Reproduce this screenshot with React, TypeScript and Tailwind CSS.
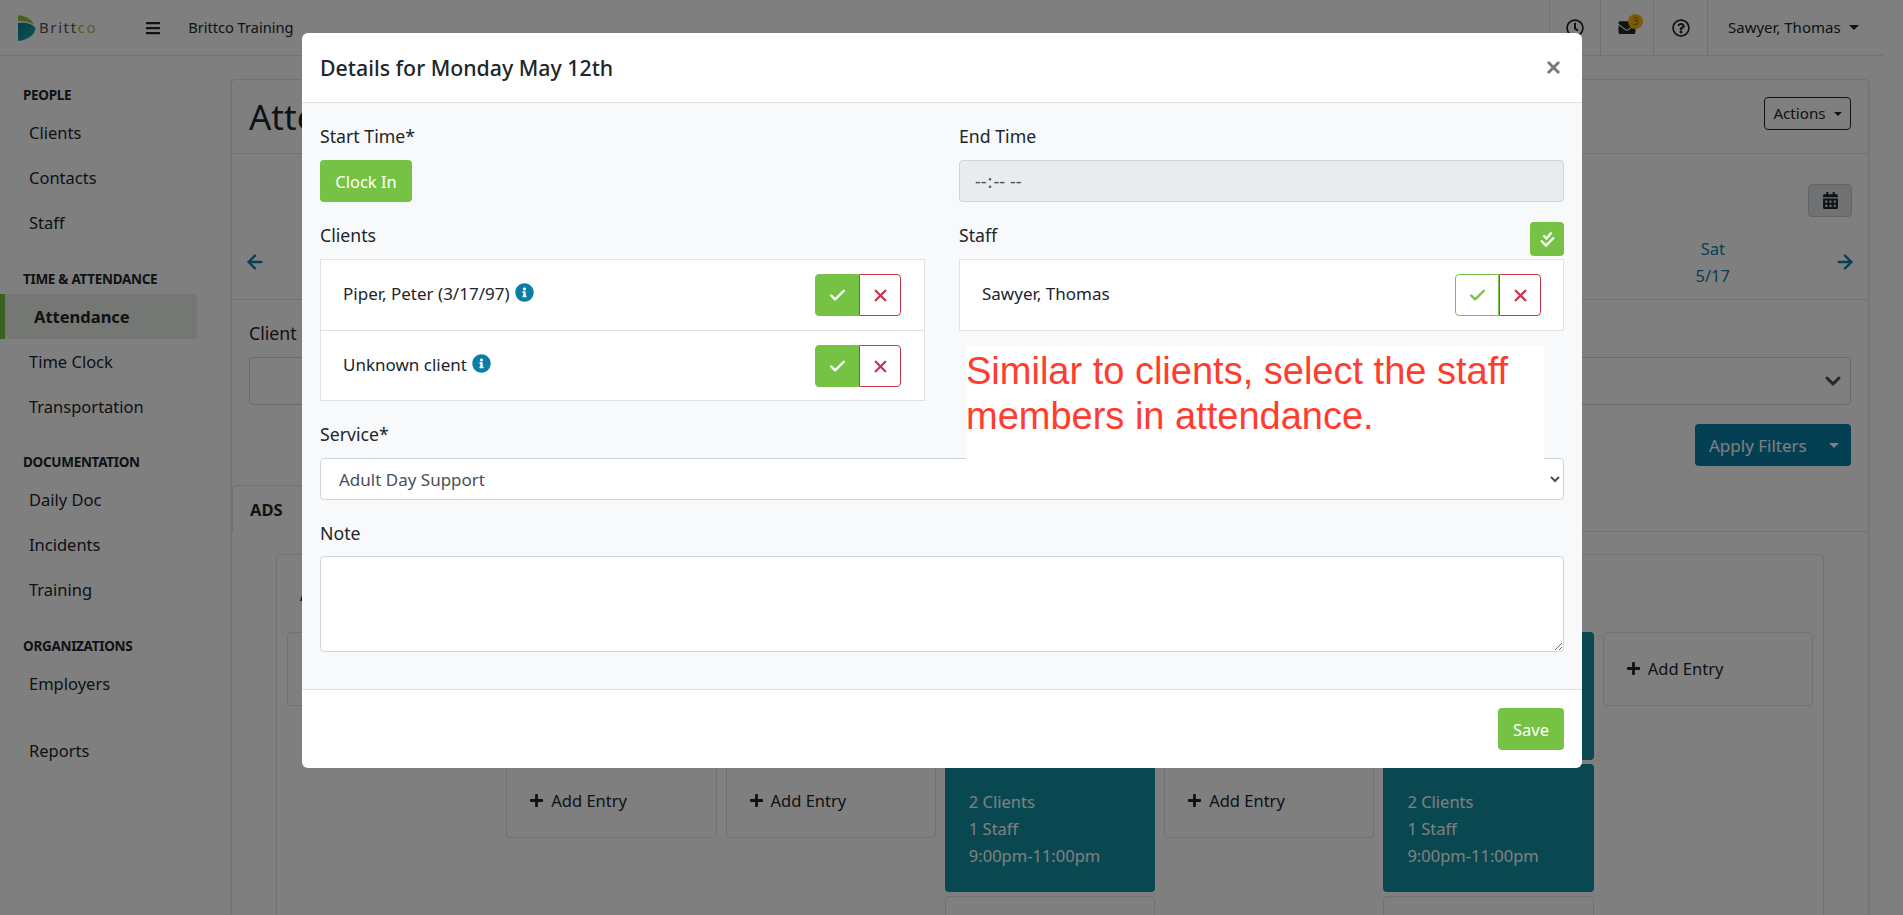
import { ArrowLeft, ArrowRight, Check, ChevronDown, X } from "lucide-react"
import {
  FaBars,
  FaCalendarAlt,
  FaEnvelope,
  FaInfoCircle,
  FaPlus,
  FaRegClock,
  FaRegQuestionCircle,
} from "react-icons/fa"

const navGroups = [
  { title: "PEOPLE", items: ["Clients", "Contacts", "Staff"] },
  { title: "TIME & ATTENDANCE", items: ["Attendance", "Time Clock", "Transportation"] },
  { title: "DOCUMENTATION", items: ["Daily Doc", "Incidents", "Training"] },
  { title: "ORGANIZATIONS", items: ["Employers"] },
]

function Logo() {
  return (
    <svg width="18" height="26" viewBox="0 0 18 26">
      <defs>
        <linearGradient id="leaf" x1="0" y1="0" x2="1" y2="1">
          <stop offset="0" stopColor="#0a7aa0" />
          <stop offset="1" stopColor="#1caf96" />
        </linearGradient>
      </defs>
      <path d="M0 0C8 1 14 4 16 10C12 7 6 6 0 6Z" fill="#9bc23c" />
      <path d="M0 8C7 7 14 8 17.5 13C17 20 10 25 0 26Z" fill="url(#leaf)" />
    </svg>
  )
}

function AddEntry({ className = "h-[74px]" }: { className?: string }) {
  return (
    <div className={`flex items-center gap-[7px] rounded border border-[#dee2e6] pb-[2px] pl-[22px] ${className}`}>
      <FaPlus className="h-[15px] w-[15px]" />
      Add Entry
    </div>
  )
}

function Visit({ className = "h-[128px]" }: { className?: string }) {
  return (
    <div className={`flex flex-col justify-end rounded bg-[#1291a3] pb-[23px] pl-[24px] text-white ${className}`}>
      <div>2 Clients</div>
      <div>1 Staff</div>
      <div>9:00pm-11:00pm</div>
    </div>
  )
}

function ToggleGroup({ selected }: { selected: boolean }) {
  return (
    <div className="flex h-[42px] w-[86px] shrink-0">
      <div
        className={`flex w-[44px] items-center justify-center rounded-l border border-[#76c244] ${
          selected ? "bg-[#76c244] text-white" : "bg-white text-[#76c244]"
        }`}
      >
        <Check className="h-[19px] w-[19px]" strokeWidth={3} />
      </div>
      <div className="flex w-[42px] items-center justify-center rounded-r border border-[#c9364f] bg-white text-[#c9364f]">
        <X className="h-[19px] w-[19px]" strokeWidth={3} />
      </div>
    </div>
  )
}

function PersonRow({
  name,
  info,
  selected,
  className = "h-[71px] pr-[23px] last:h-[69px] last:border-b-0",
}: {
  name: string
  info?: boolean
  selected: boolean
  className?: string
}) {
  return (
    <div className={`flex justify-between border-b border-[#dee2e6] pl-[22px] pt-[14px] ${className}`}>
      <div className="flex h-[38px] items-center gap-[5px] text-[17px]">
        {name}
        {info && <FaInfoCircle className="mb-[2px] h-[19px] w-[19px] text-[#0b7ea8]" />}
      </div>
      <ToggleGroup selected={selected} />
    </div>
  )
}

function Sidebar() {
  return (
    <aside className="w-[231px] shrink-0 pt-[25px]">
      {navGroups.map((group) => (
        <div key={group.title} className="mb-[19.6px] w-[197px]">
          <div className="flex h-[29px] items-center pl-[23px] text-[13.5px] font-bold tracking-[-0.3px] text-[#212529]">
            {group.title}
          </div>
          {group.items.map((item) =>
            item === "Attendance" ? (
              <div
                key={item}
                className="flex h-[45px] items-center border-l-[5px] border-[#76c244] bg-[#e9eee6] pl-[29px] font-bold text-[#212529]"
              >
                {item}
              </div>
            ) : (
              <div key={item} className="flex h-[45px] items-center pl-[29px] text-[#212529]">
                {item}
              </div>
            ),
          )}
        </div>
      ))}
      <div className="mt-[22px] flex h-[45px] items-center pl-[29px] text-[#212529]">Reports</div>
    </aside>
  )
}

function TopBar() {
  return (
    <header className="flex h-[56px] w-[1883px] items-center border-b border-[#dee2e6] pl-[18px] text-[#212529]">
      <Logo />
      <span className="ml-[3px] text-[15px] tracking-[1.6px] text-[#555]">
        Britt<span className="text-[#a8c43c]">co</span>
      </span>
      <FaBars className="ml-[48px] h-[16px] w-[16px]" />
      <span className="ml-[27px] text-[14.6px]">Brittco Training</span>
      <div className="ml-auto flex h-full">
        <div className="flex w-[51px] items-center justify-center border-l border-[#dee2e6]">
          <FaRegClock className="h-[18px] w-[18px]" />
        </div>
        <div className="relative flex w-[53px] items-center justify-center border-l border-[#dee2e6]">
          <FaEnvelope className="h-[17px] w-[18px]" />
          <span className="absolute left-[27px] top-[14px] flex h-[15px] w-[15px] items-center justify-center rounded-full bg-[#f5b50f] text-[10px] text-[#8a6a10]">
            3
          </span>
        </div>
        <div className="flex w-[54px] items-center justify-center border-l border-[#dee2e6]">
          <FaRegQuestionCircle className="h-[18px] w-[18px]" />
        </div>
        <div className="flex w-[176px] items-center gap-[8px] border-l border-[#dee2e6] pl-[20px] text-[15px]">
          Sawyer, Thomas
          <span className="h-0 w-0 border-x-[5px] border-t-[5px] border-x-transparent border-t-[#212529]" />
        </div>
      </div>
    </header>
  )
}

function PageContent() {
  return (
    <main className="w-[1638px] pt-[23px]">
      <div className="rounded border border-[#dee2e6] shadow-sm">
        <div className="flex h-[74px] items-center justify-between border-b border-[#dee2e6] pl-[17px] pr-[17px]">
          <h1 className="text-[35px] text-[#212529]">Attendance</h1>
          <button className="mb-[6px] flex h-[33px] w-[87px] items-center justify-center gap-[8px] rounded border border-[#212529] text-[15.2px]">
            Actions
            <span className="h-0 w-0 border-x-[4px] border-t-[4px] border-x-transparent border-t-[#212529]" />
          </button>
        </div>

        <div className="h-[146px] border-b border-[#dee2e6] pl-[12px] pr-[12px] pt-[30px]">
          <div className="flex justify-end pr-[4px]">
            <div className="flex h-[33px] w-[44px] items-center justify-center rounded border border-[#c4cad0] bg-[#dfe3e7]">
              <FaCalendarAlt className="h-[17px] w-[15px]" />
            </div>
          </div>
          <div className="mt-[18px] flex items-center justify-between text-[#0b7ea8]">
            <ArrowLeft className="h-[22px] w-[22px]" strokeWidth={2.5} />
            <div className="ml-auto mr-[104px] text-center leading-[27px]">
              <div>Sat</div>
              <div>5/17</div>
            </div>
            <ArrowRight className="h-[22px] w-[22px]" strokeWidth={2.5} />
          </div>
        </div>

        <div className="px-[17px] pt-[20px]">
          <div className="text-[17.7px] leading-[27px]">Client</div>
          <div className="mt-[10px] flex h-[48px] items-center justify-end rounded border border-[#ced4da] pr-[5px]">
            <ChevronDown className="h-[24px] w-[24px] text-[#495057]" strokeWidth={3} />
          </div>
          <div className="mt-[19px] flex justify-end">
            <button className="flex h-[42px] w-[156px] items-center justify-between rounded bg-[#0b7ea8] pl-[14px] pr-[12px] text-[17px] text-white">
              Apply Filters
              <span className="h-0 w-0 border-x-[5px] border-t-[5px] border-x-transparent border-t-white" />
            </button>
          </div>
        </div>

        <div className="mt-[19px] flex h-[47px] items-stretch">
          <div className="flex w-[80px] items-center rounded-t border border-b-0 border-[#dee2e6] pl-[17px] font-bold">
            ADS
          </div>
          <div className="flex-1 border-b border-[#dee2e6]" />
        </div>

        <div className="mx-[44px] mb-[40px] mt-[22px] h-[500px] rounded-t border border-[#dee2e6] px-[10px]">
          <div className="h-[77px] pl-[13px] pt-[26px] font-bold">Adult Day Support</div>
          <div className="grid grid-cols-7 gap-x-[9px]">
            <div>
              <AddEntry />
            </div>
            <div className="flex flex-col gap-[4px]">
              <Visit />
              <AddEntry />
            </div>
            <div className="flex flex-col gap-[4px]">
              <Visit />
              <AddEntry />
            </div>
            <div className="flex flex-col gap-[4px]">
              <Visit />
              <Visit />
              <AddEntry />
            </div>
            <div className="flex flex-col gap-[4px]">
              <Visit />
              <AddEntry />
            </div>
            <div className="flex flex-col gap-[4px]">
              <Visit />
              <Visit />
              <AddEntry />
            </div>
            <div>
              <AddEntry />
            </div>
          </div>
        </div>
      </div>
    </main>
  )
}

function DetailsModal() {
  return (
    <div className="absolute left-[302px] top-[33px] flex h-[735px] w-[1280px] flex-col overflow-hidden rounded-[6px] bg-white text-[#212529]">
      <div className="flex h-[70px] shrink-0 items-center justify-between border-b border-[#dee2e6] pl-[18px] pr-[19px]">
        <h5 className="text-[21.3px] font-medium">Details for Monday May 12th</h5>
        <X className="h-[19px] w-[19px] text-[#777]" strokeWidth={3.5} />
      </div>

      <div className="relative flex-1 bg-[#f8f9fa] px-[18px] pt-[20px]">
        <div className="grid grid-cols-2 gap-x-[34px]">
          <div>
            <label className="block text-[17.7px] leading-[27px]">Start Time*</label>
            <button className="mt-[10px] h-[42px] w-[92px] rounded bg-[#76c244] text-white">Clock In</button>
          </div>
          <div>
            <label className="block text-[17.7px] leading-[27px]">End Time</label>
            <input
              type="time"
              disabled
              className="mt-[10px] block h-[42px] w-full rounded border border-[#ced4da] bg-[#e9ecef] px-[14px] text-[18px] tracking-[2px] text-[#495057]"
            />
          </div>

          <div className="mt-[19px]">
            <div className="flex h-[34px] items-start justify-between pt-[1px]">
              <label className="text-[17.7px] leading-[27px]">Clients</label>
            </div>
            <div className="mt-[4px] border border-[#dee2e6] bg-white">
              <PersonRow name="Piper, Peter (3/17/97)" info selected />
              <PersonRow name="Unknown client" info selected />
            </div>
          </div>
          <div className="mt-[19px]">
            <div className="flex h-[34px] items-start justify-between pt-[1px]">
              <label className="text-[17.7px] leading-[27px]">Staff</label>
              <button className="flex h-[34px] w-[34px] items-center justify-center rounded bg-[#76c244]">
                <svg width="17" height="17" viewBox="0 0 17 17" fill="none" stroke="white" strokeWidth="2.4">
                  <path d="M4.5 4.5L7.5 7.5L12.5 1.5" />
                  <path d="M2 9.5L7 14.5L15 6.5" />
                </svg>
              </button>
            </div>
            <div className="mt-[4px] border border-[#dee2e6] bg-white">
              <PersonRow name="Sawyer, Thomas" selected={false} className="h-[70px] border-b-0 pr-[22px]" />
            </div>
          </div>
        </div>

        <label className="mt-[20px] block text-[17.7px] leading-[27px]">Service*</label>
        <select className="mt-[10px] block h-[42px] w-full rounded border border-[#ced4da] bg-white pl-[14px] text-[17px] text-[#495057]">
          <option>Adult Day Support</option>
        </select>

        <label className="mt-[20px] block text-[17.7px] leading-[27px]">Note</label>
        <textarea className="mt-[9px] block h-[96px] w-full rounded border border-[#ced4da] bg-white" />

        <div className="absolute left-[664px] top-[243px] h-[113px] w-[578px] bg-white pt-[3px] font-['Liberation_Sans',sans-serif] text-[38px] leading-[45px] text-[#ff3c2e]">
          <div>Similar to clients, select the staff</div>
          <div>members in attendance.</div>
        </div>
      </div>

      <div className="flex h-[79px] shrink-0 items-center justify-end border-t border-[#dee2e6] pr-[18px]">
        <button className="h-[42px] w-[66px] rounded bg-[#76c244] text-white">Save</button>
      </div>
    </div>
  )
}

export default function App() {
  return (
    <div className="relative h-[915px] w-[1903px] overflow-hidden bg-white font-['Noto_Sans',sans-serif] text-[16.5px] leading-[27px] text-[#212529]">
      <TopBar />
      <div className="flex">
        <Sidebar />
        <PageContent />
      </div>
      <div className="absolute inset-0 bg-black/50" />
      <DetailsModal />
    </div>
  )
}
